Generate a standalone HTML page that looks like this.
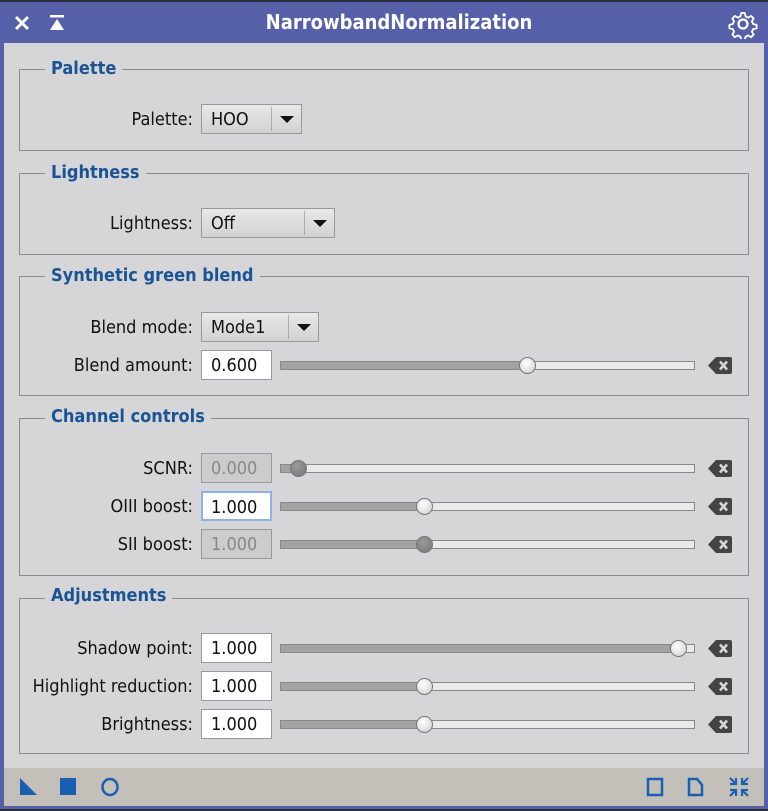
<!DOCTYPE html><html><head><style>
*{margin:0;padding:0;box-sizing:border-box}
body{width:768px;height:811px;background:#2a2d3a;position:relative;overflow:hidden;font-family:"DejaVu Sans Condensed","Liberation Sans Narrow","Liberation Sans",sans-serif;font-size:18px;color:#111}
.win{position:absolute;left:0;top:2px;width:768px;height:807px;background:#5560a8;}
.title{position:absolute;left:30px;top:0;width:738px;height:41px;color:#fff;font-weight:bold;font-size:20px;text-align:center;line-height:41px;font-family:"DejaVu Sans Condensed","Liberation Sans",sans-serif}
.body{position:absolute;left:4px;top:41px;width:760px;height:725px;background:#d6d6d8}
.foot{position:absolute;left:4px;top:766px;width:760px;height:38px;background:#c3c0b9}
.grp{position:absolute;left:19px;width:730px;border:1.5px solid #8a8a8a}
.gt{position:absolute;left:26px;background:#d6d6d8;padding:0 6px;color:#1a5494;font-weight:bold;font-size:18px;line-height:22px}
.lbl{position:absolute;right:575px;text-align:right;line-height:32px;white-space:nowrap}
.box{position:absolute;left:201px;width:71px;height:30px;background:#fff;border:1px solid #999;padding-left:9px;line-height:30px}
.dis{background:#ccc;color:#888;}
.cmb{position:absolute;left:201px;height:30px;border:1px solid #999;background:linear-gradient(#e8e8e8,#d2d2d2);padding-left:9px;line-height:30px}
.cmb i{position:absolute;right:0;top:2px;width:30px;height:24px;border-left:1px solid #aaa}
.cmb i:after{content:"";position:absolute;left:8px;top:9px;border-left:7px solid transparent;border-right:7px solid transparent;border-top:7px solid #111}
.sl{position:absolute;left:280px;width:415px;height:9px;border:1px solid #888;background:#eaeaea}
.sl b{position:absolute;left:0;top:0;height:7px;background:#a3a3a3}
.h{position:absolute;width:17px;height:17px;border-radius:50%;border:1px solid #777;background:radial-gradient(circle at 40% 35%,#fff,#ccc)}
.hd{background:radial-gradient(circle at 40% 35%,#999,#777)}
.x{position:absolute;left:708px;width:24px;height:17px}
</style></head><body>
<div class="win">
<div class="title">NarrowbandNormalization</div>
<svg style="position:absolute;left:13px;top:12px" width="18" height="18"><path d="M3 3L15 15M15 3L3 15" stroke="#fff" stroke-width="3"/></svg>
<svg style="position:absolute;left:48px;top:12px" width="18" height="18"><rect x="2" y="1" width="14" height="2.5" fill="#fff"/><path d="M9 5L16 16H2Z" fill="#fff"/></svg>
<svg style="position:absolute;left:728px;top:7px" width="30" height="30" viewBox="0 0 30 30"><path d="M13 2h4l1 4 3 1.5 3.5-2 3 3-2 3.5 1.5 3 4 1v4l-4 1-1.5 3 2 3.5-3 3-3.5-2-3 1.5-1 4h-4l-1-4-3-1.5-3.5 2-3-3 2-3.5-1.5-3-4-1v-4l4-1 1.5-3-2-3.5 3-3 3.5 2 3-1.5z" fill="none" stroke="#fff" stroke-width="2.2" stroke-linejoin="round" transform="translate(15 15) scale(.85) translate(-15 -15)"/><circle cx="15" cy="15" r="4.5" fill="none" stroke="#fff" stroke-width="2.2"/></svg>
<div class="body"></div>
<div class="foot"></div>
</div>

<div class="grp" style="top:69px;height:82px"></div><div class="gt" style="top:58px;left:45px">Palette</div>
<div class="lbl" style="top:104px">Palette:</div><div class="cmb" style="top:104px;width:101px">HOO<i></i></div>

<div class="grp" style="top:173px;height:82px"></div><div class="gt" style="top:162px;left:45px">Lightness</div>
<div class="lbl" style="top:208px">Lightness:</div><div class="cmb" style="top:208px;width:134px">Off<i></i></div>

<div class="grp" style="top:276px;height:120px"></div><div class="gt" style="top:265px;left:45px">Synthetic green blend</div>
<div class="lbl" style="top:312px">Blend mode:</div><div class="cmb" style="top:312px;width:118px">Mode1<i></i></div>
<div class="lbl" style="top:350px">Blend amount:</div><div class="box" style="top:350px">0.600</div>
<div class="sl" style="top:361px"><b style="width:246px"></b></div><div class="h" style="left:519px;top:357px"></div>

<div class="grp" style="top:418px;height:158px"></div><div class="gt" style="top:406px;left:45px">Channel controls</div>
<div class="lbl" style="top:453px">SCNR:</div><div class="box dis" style="top:453px">0.000</div>
<div class="sl" style="top:464px"><b style="width:16px"></b></div><div class="h hd" style="left:290px;top:460px"></div>
<div class="lbl" style="top:491px">OIII boost:</div><div class="box" style="top:491px;border:2px solid #8fb0e8;padding-left:8px">1.000</div>
<div class="sl" style="top:502px"><b style="width:143px"></b></div><div class="h" style="left:416px;top:498px"></div>
<div class="lbl" style="top:529px">SII boost:</div><div class="box dis" style="top:529px">1.000</div>
<div class="sl" style="top:540px"><b style="width:143px"></b></div><div class="h hd" style="left:416px;top:536px"></div>

<div class="grp" style="top:598px;height:156px"></div><div class="gt" style="top:585px;left:45px">Adjustments</div>
<div class="lbl" style="top:633px">Shadow point:</div><div class="box" style="top:633px">1.000</div>
<div class="sl" style="top:644px"><b style="width:398px"></b></div><div class="h" style="left:670px;top:640px"></div>
<div class="lbl" style="top:671px">Highlight reduction:</div><div class="box" style="top:671px">1.000</div>
<div class="sl" style="top:682px"><b style="width:143px"></b></div><div class="h" style="left:416px;top:678px"></div>
<div class="lbl" style="top:709px">Brightness:</div><div class="box" style="top:709px">1.000</div>
<div class="sl" style="top:720px"><b style="width:143px"></b></div><div class="h" style="left:416px;top:716px"></div>

<svg width="0" height="0"><defs><symbol id="cx" viewBox="0 0 24 17"><path d="M8 0H22Q24 0 24 2V15Q24 17 22 17H8L0 8.5Z" fill="#444"/><path d="M12 4.5L19 12.5M19 4.5L12 12.5" stroke="#d6d6d8" stroke-width="2.6"/></symbol></defs></svg>
<svg class="x" style="top:357px"><use href="#cx"/></svg>
<svg class="x" style="top:460px"><use href="#cx"/></svg>
<svg class="x" style="top:498px"><use href="#cx"/></svg>
<svg class="x" style="top:536px"><use href="#cx"/></svg>
<svg class="x" style="top:640px"><use href="#cx"/></svg>
<svg class="x" style="top:678px"><use href="#cx"/></svg>
<svg class="x" style="top:716px"><use href="#cx"/></svg>

<svg style="position:absolute;left:18px;top:777px" width="110" height="20"><path d="M2 1L19 18H2Z" fill="#1a5fb4"/><rect x="42" y="1" width="16" height="17" fill="#1a5fb4"/><ellipse cx="92" cy="10" rx="7.5" ry="8" fill="none" stroke="#1a5fb4" stroke-width="2.5"/></svg>
<svg style="position:absolute;left:646px;top:777px" width="106" height="20"><rect x="2" y="2" width="14" height="16" fill="none" stroke="#1a5fb4" stroke-width="2.5"/><path d="M43 2H51L56 8V18H43Z" fill="none" stroke="#1a5fb4" stroke-width="2.5"/><path d="M84 1L90 7M90 1V7H84M102 1L96 7M96 1V7H102M84 19L90 13M90 19V13H84M102 19L96 13M96 19V13H102" stroke="#1a5fb4" stroke-width="2.2" fill="none"/></svg>
</body></html>
